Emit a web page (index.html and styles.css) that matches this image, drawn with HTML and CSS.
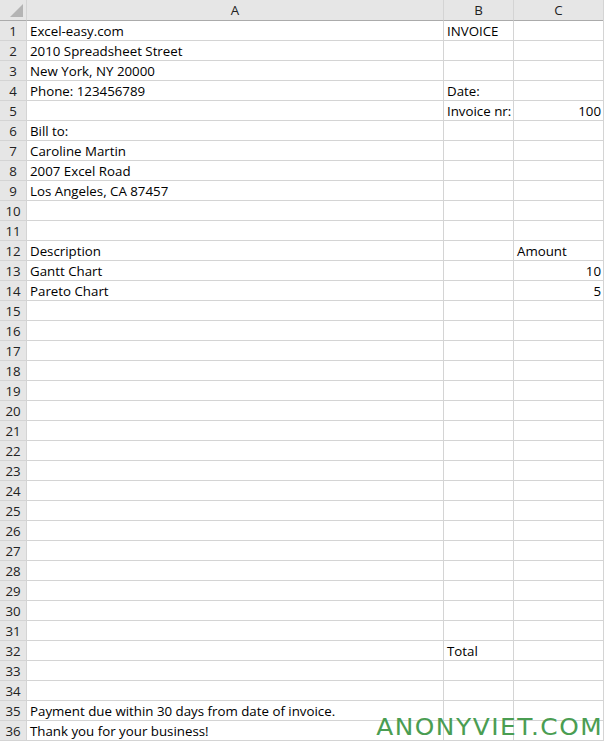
FILE: index.html
```html
<!DOCTYPE html>
<html>
<head>
<meta charset="utf-8">
<link rel="stylesheet" href="styles.css">
</head>
<body>
<div class="sheet">
  <div class="grid">
    <div class="corner"><span class="tri"></span></div>
    <div class="colhead">A</div>
    <div class="colhead">B</div>
    <div class="colhead">C</div>

    <div class="rh">1</div><div class="c">Excel-easy.com</div><div class="c">INVOICE</div><div class="c"></div>
    <div class="rh">2</div><div class="c">2010 Spreadsheet Street</div><div class="c"></div><div class="c"></div>
    <div class="rh">3</div><div class="c">New York, NY 20000</div><div class="c"></div><div class="c"></div>
    <div class="rh">4</div><div class="c">Phone: 123456789</div><div class="c">Date:</div><div class="c"></div>
    <div class="rh">5</div><div class="c"></div><div class="c">Invoice nr:</div><div class="c num">100</div>
    <div class="rh">6</div><div class="c">Bill to:</div><div class="c"></div><div class="c"></div>
    <div class="rh">7</div><div class="c">Caroline Martin</div><div class="c"></div><div class="c"></div>
    <div class="rh">8</div><div class="c">2007 Excel Road</div><div class="c"></div><div class="c"></div>
    <div class="rh">9</div><div class="c">Los Angeles, CA 87457</div><div class="c"></div><div class="c"></div>
    <div class="rh">10</div><div class="c"></div><div class="c"></div><div class="c"></div>
    <div class="rh">11</div><div class="c"></div><div class="c"></div><div class="c"></div>
    <div class="rh">12</div><div class="c">Description</div><div class="c"></div><div class="c">Amount</div>
    <div class="rh">13</div><div class="c">Gantt Chart</div><div class="c"></div><div class="c num">10</div>
    <div class="rh">14</div><div class="c">Pareto Chart</div><div class="c"></div><div class="c num">5</div>
    <div class="rh">15</div><div class="c"></div><div class="c"></div><div class="c"></div>
    <div class="rh">16</div><div class="c"></div><div class="c"></div><div class="c"></div>
    <div class="rh">17</div><div class="c"></div><div class="c"></div><div class="c"></div>
    <div class="rh">18</div><div class="c"></div><div class="c"></div><div class="c"></div>
    <div class="rh">19</div><div class="c"></div><div class="c"></div><div class="c"></div>
    <div class="rh">20</div><div class="c"></div><div class="c"></div><div class="c"></div>
    <div class="rh">21</div><div class="c"></div><div class="c"></div><div class="c"></div>
    <div class="rh">22</div><div class="c"></div><div class="c"></div><div class="c"></div>
    <div class="rh">23</div><div class="c"></div><div class="c"></div><div class="c"></div>
    <div class="rh">24</div><div class="c"></div><div class="c"></div><div class="c"></div>
    <div class="rh">25</div><div class="c"></div><div class="c"></div><div class="c"></div>
    <div class="rh">26</div><div class="c"></div><div class="c"></div><div class="c"></div>
    <div class="rh">27</div><div class="c"></div><div class="c"></div><div class="c"></div>
    <div class="rh">28</div><div class="c"></div><div class="c"></div><div class="c"></div>
    <div class="rh">29</div><div class="c"></div><div class="c"></div><div class="c"></div>
    <div class="rh">30</div><div class="c"></div><div class="c"></div><div class="c"></div>
    <div class="rh">31</div><div class="c"></div><div class="c"></div><div class="c"></div>
    <div class="rh">32</div><div class="c"></div><div class="c">Total</div><div class="c"></div>
    <div class="rh">33</div><div class="c"></div><div class="c"></div><div class="c"></div>
    <div class="rh">34</div><div class="c"></div><div class="c"></div><div class="c"></div>
    <div class="rh">35</div><div class="c">Payment due within 30 days from date of invoice.</div><div class="c"></div><div class="c"></div>
    <div class="rh">36</div><div class="c">Thank you for your business!</div><div class="c"></div><div class="c"></div>
  </div>
  <div class="watermark">ANONYVIET.COM</div>
</div>
</body>
</html>
```

FILE: styles.css
```css
html, body {
  margin: 0;
  padding: 0;
  background: #ffffff;
}
.sheet {
  position: relative;
  width: 604px;
  height: 741px;
  overflow: hidden;
}
.grid {
  display: grid;
  grid-template-columns: 27px 417px 70px 89px;
  grid-template-rows: 21px;
  grid-auto-rows: 20px;
  font-family: "Open Sans", "Liberation Sans", sans-serif;
  font-size: 13.3px;
  color: #000;
  border-right: 1px solid #d4d4d4;
  width: 603px;
}
.grid > div {
  box-sizing: border-box;
  border-right: 1px solid #d4d4d4;
  border-bottom: 1px solid #d4d4d4;
  white-space: nowrap;
  line-height: 19px;
  padding-top: 1px;
  overflow: visible;
}
.grid > div:nth-child(4n) {
  border-right: none;
}
.corner {
  background: #e6e6e6;
  position: relative;
  border-bottom: 1px solid #ababab !important;
}
.tri {
  position: absolute;
  right: 3px;
  bottom: 3px;
  width: 0;
  height: 0;
  border-left: 13px solid transparent;
  border-bottom: 13px solid #b4b4b4;
}
.colhead {
  background: #e6e6e6;
  text-align: center;
  color: #222;
  border-bottom: 1px solid #ababab !important;
}
.rh {
  background: #e6e6e6;
  text-align: center;
  color: #222;
}
.c {
  padding-left: 3px;
  padding-right: 2px;
}
.c.num {
  text-align: right;
}
.watermark {
  position: absolute;
  right: 1px;
  top: 716px;
  font-family: "DejaVu Sans", sans-serif;
  font-size: 23px;
  line-height: 23px;
  color: #4a9d52;
  letter-spacing: 1.4px;
  white-space: nowrap;
  transform: scaleX(1.08);
  transform-origin: right center;
}
```
